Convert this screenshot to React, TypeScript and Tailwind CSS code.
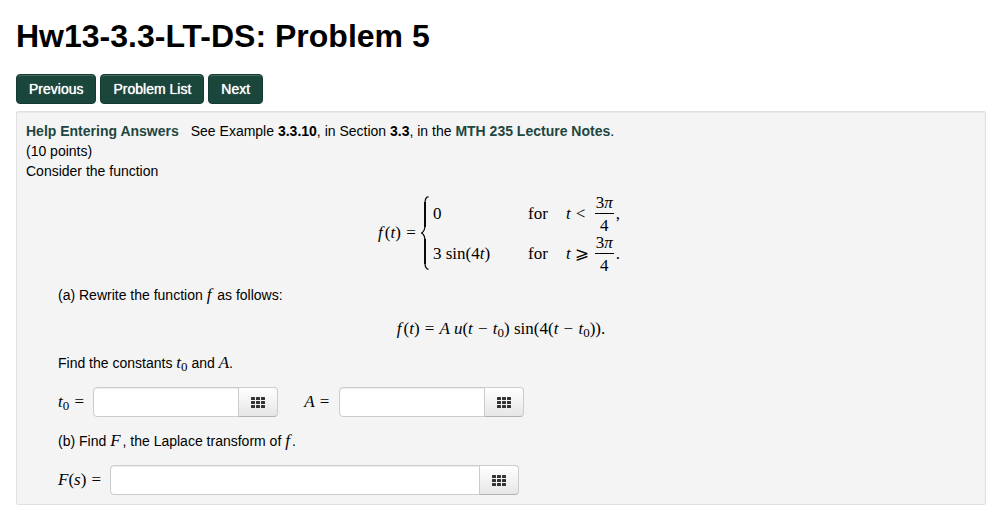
import { ReactNode } from 'react';

const navLinks = [
  { label: 'Previous', href: '#previous' },
  { label: 'Problem List', href: '#list' },
  { label: 'Next', href: '#next' },
];

const cases = [
  { value: '0', variable: '', close: '', relation: '<', end: ',' },
  { value: '3 sin(4', variable: 't', close: ')', relation: '⩾', end: '.' },
];

function MathText({ children }: { children: ReactNode }) {
  return (
    <span className="whitespace-nowrap font-['Liberation_Serif',serif] text-[17px] leading-5">
      {children}
    </span>
  );
}

function Op({ children }: { children: ReactNode }) {
  return <span className="mx-1 inline-block w-3 text-center">{children}</span>;
}

function TZero() {
  return (
    <>
      <i>t</i>
      <sub className="text-[13px]">0</sub>
    </>
  );
}

function FOfT() {
  return (
    <>
      <i className="mr-0.5">f</i>(<i>t</i>)
    </>
  );
}

function Fraction() {
  return (
    <span className="flex w-[19px] flex-col text-center leading-5">
      <span className="border-b border-black">
        3<i>π</i>
      </span>
      <span className="h-5 leading-6">4</span>
    </span>
  );
}

function Brace() {
  return (
    <svg className="h-[74px] w-2" viewBox="0 0 8 74" fill="none" aria-hidden="true">
      <path
        d="M7.5 .7C4.8 1.2 4 3.2 4 7V29C4 33.5 3.5 35.5 .5 37C3.5 38.5 4 40.5 4 45V67C4 70.8 4.8 72.8 7.5 73.3"
        stroke="black"
        strokeWidth="1.2"
      />
      <path d="M4 6V31M4 43V68" stroke="black" strokeWidth="1.8" />
    </svg>
  );
}

function KeypadIcon() {
  return (
    <svg className="h-[11px] w-[14px]" viewBox="0 0 14 11" fill="#333" aria-hidden="true">
      {[0, 4, 8].map((y) =>
        [0, 5, 10].map((x) => <rect key={`${x}-${y}`} x={x} y={y} width="4" height="3" rx=".5" />)
      )}
    </svg>
  );
}

type AnswerProps = {
  id: string;
  label: ReactNode;
  wide?: boolean;
};

function AnswerField({ id, label, wide }: AnswerProps) {
  return (
    <div className="flex items-center gap-1">
      <label htmlFor={id}>
        <MathText>
          {label}
          <Op>=</Op>
        </MathText>
      </label>
      <div className="flex">
        <input
          id={id}
          type="text"
          className={`h-[30px] rounded-l border border-[#ccc] bg-white px-1.5 shadow-[inset_0_1px_1px_rgba(0,0,0,0.075)] outline-none focus:border-[#18453b] ${
            wide ? 'w-[370px]' : 'w-[146px]'
          }`}
        />
        <button
          type="button"
          aria-label="Open equation editor"
          className="-ml-px flex h-[30px] w-10 items-center justify-center rounded-r border border-[#ccc] border-b-[#b3b3b3] bg-linear-to-b from-white to-[#e6e6e6]"
        >
          <KeypadIcon />
        </button>
      </div>
    </div>
  );
}

export default function App() {
  return (
    <main className="px-4 pt-4 pb-3 font-['Liberation_Sans',Arial,sans-serif] text-sm leading-5 text-black">
      <h1 className="text-[32px] leading-10 font-bold">Hw13-3.3-LT-DS: Problem 5</h1>

      <nav className="mt-[18px] flex gap-1">
        {navLinks.map((link) => (
          <a
            key={link.label}
            href={link.href}
            className="rounded border border-[#143b32] bg-[#1b463b] px-3 py-1 text-white shadow-[inset_0_1px_0_rgba(255,255,255,0.2)] [text-shadow:0_0_1px_white]"
          >
            {link.label}
          </a>
        ))}
      </nav>

      <section className="mt-[7px] rounded-xs border border-[#e0e0e0] bg-[#f4f4f4] p-[9px] shadow-[inset_0_1px_1px_rgba(0,0,0,0.05)]">
        <p>
          <a href="#help" className="mr-3 font-bold text-[#20463f]">
            Help Entering Answers
          </a>
          See Example <b>3.3.10</b>, in Section <b>3.3</b>, in the{' '}
          <a href="#notes" className="font-bold text-[#20463f]">
            MTH 235 Lecture Notes
          </a>
          .
        </p>
        <p>(10 points)</p>
        <p>Consider the function</p>

        {/* Piecewise definition of f */}
        <div className="mt-3 flex justify-center pr-1">
          <MathText>
            <span className="flex items-center">
              <span>
                <FOfT />
                <Op>=</Op>
              </span>
              <Brace />
              <span className="ml-1 grid grid-cols-[auto_auto_auto] gap-x-[18px]">
                {cases.map((c) => (
                  <span key={c.relation} className="col-span-3 grid h-10 grid-cols-subgrid items-center">
                    <span className="pr-5">
                      {c.value}
                      <i>{c.variable}</i>
                      {c.close}
                    </span>
                    <span>for</span>
                    <span className="flex items-center">
                      <i>t</i>
                      <span className="ml-1 mr-2 w-3 text-center font-['Liberation_Serif','DejaVu_Sans',serif]">
                        {c.relation}
                      </span>
                      <Fraction />
                      <span className="ml-0.5">{c.end}</span>
                    </span>
                  </span>
                ))}
              </span>
            </span>
          </MathText>
        </div>

        <div className="mt-3 px-8">
          <p>
            (a) Rewrite the function{' '}
            <MathText>
              <i className="mr-0.5">f</i>
            </MathText>{' '}
            as follows:
          </p>
          <p className="my-3.5 text-center">
            <MathText>
              <FOfT />
              <Op>=</Op>
              <i>A u</i>(<i>t</i>
              <Op>−</Op>
              <TZero />) sin(4(<i>t</i>
              <Op>−</Op>
              <TZero />
              )).
            </MathText>
          </p>
          <p>
            Find the constants{' '}
            <MathText>
              <TZero />
            </MathText>{' '}
            and{' '}
            <MathText>
              <i>A</i>
            </MathText>
            .
          </p>

          <div className="mt-3.5 flex gap-[26px]">
            <AnswerField id="t0" label={<TZero />} />
            <AnswerField id="amplitude" label={<i>A</i>} />
          </div>

          <p className="my-3.5">
            (b) Find{' '}
            <MathText>
              <i className="mr-0.5">F</i>
            </MathText>
            , the Laplace transform of{' '}
            <MathText>
              <i className="mr-0.5">f</i>
            </MathText>
            .
          </p>
          <AnswerField
            id="transform"
            wide
            label={
              <>
                <i>F</i>(<i>s</i>)
              </>
            }
          />
        </div>
      </section>
    </main>
  );
}
